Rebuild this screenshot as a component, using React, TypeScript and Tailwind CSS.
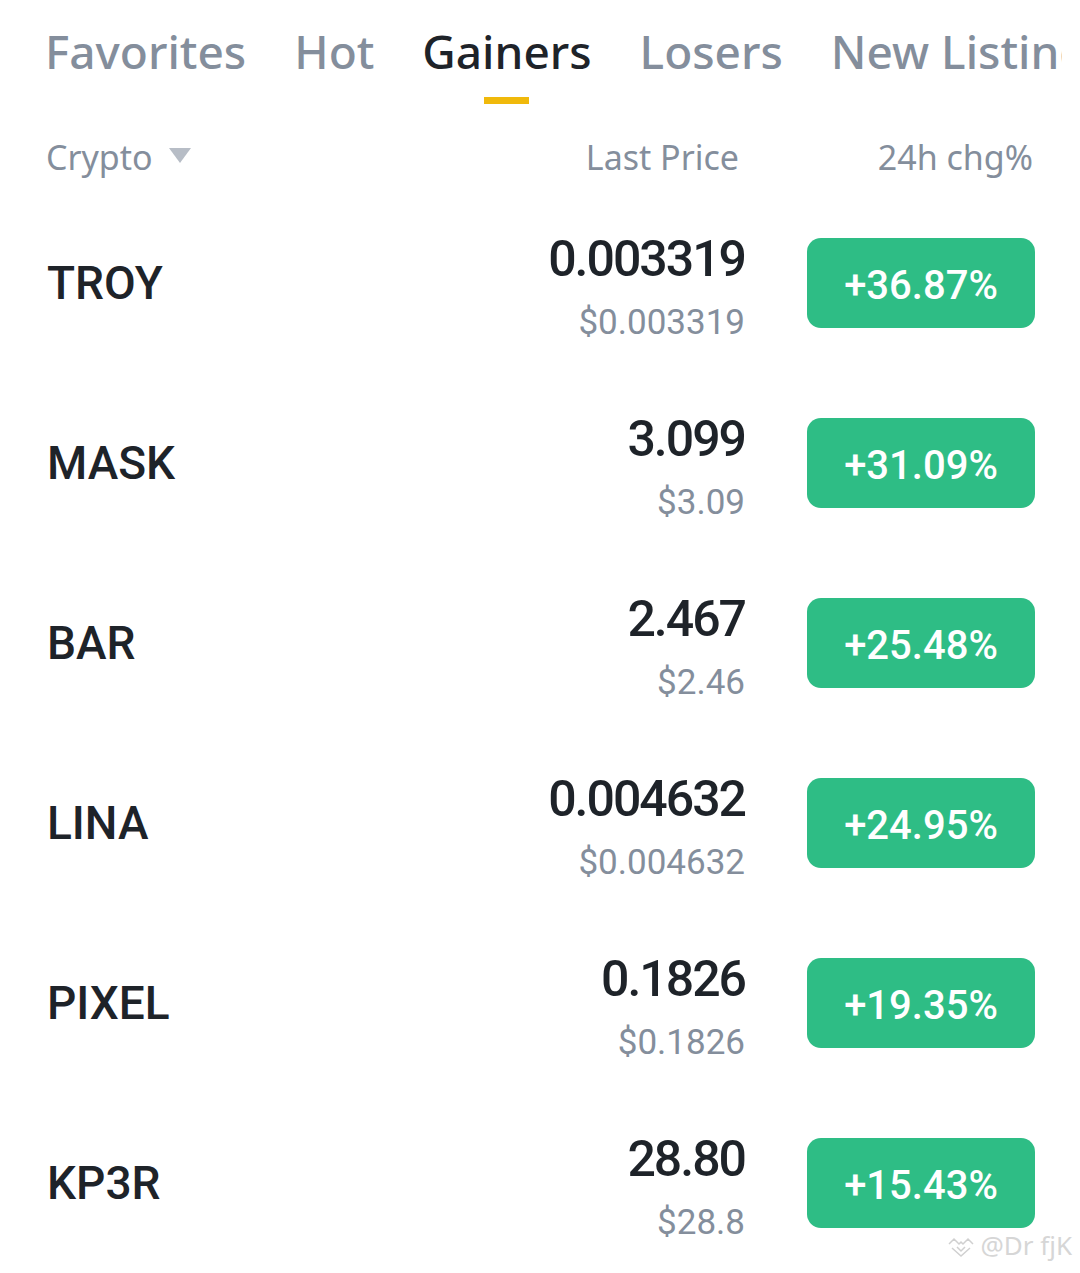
import React from 'react';

interface Row {
  symbol: string;
  price: string;
  usd: string;
  change: string;
}

const rows: Row[] = [
  { symbol: 'TROY', price: '0.003319', usd: '$0.003319', change: '+36.87%' },
  { symbol: 'MASK', price: '3.099', usd: '$3.09', change: '+31.09%' },
  { symbol: 'BAR', price: '2.467', usd: '$2.46', change: '+25.48%' },
  { symbol: 'LINA', price: '0.004632', usd: '$0.004632', change: '+24.95%' },
  { symbol: 'PIXEL', price: '0.1826', usd: '$0.1826', change: '+19.35%' },
  { symbol: 'KP3R', price: '28.80', usd: '$28.8', change: '+15.43%' },
];

const tabs = ['Favorites', 'Hot', 'Gainers', 'Losers', 'New Listing'];

const App: React.FC = () => {
  return (
    <div className="relative w-[1080px] h-[1273px] bg-white overflow-hidden font-['Noto_Sans',sans-serif]">
      {/* tabs, last one runs off the edge */}
      <div className="w-[1062px] overflow-hidden whitespace-nowrap pt-[21px] pl-[45px]">
        <div className="flex gap-[48px]">
          {tabs.map((t) => {
            const active = t === 'Gainers';
            return (
              <div key={t} className="flex flex-col items-center shrink-0">
                <span
                  className={`text-[46px] leading-[60px] font-medium ${
                    active ? 'text-[#1E2329]' : 'text-[#848E9C]'
                  }`}
                >
                  {t}
                </span>
                <div className={`mt-[16px] h-[7px] w-[45px] ${active ? 'bg-[#F0B90B]' : 'bg-transparent'}`} />
              </div>
            );
          })}
        </div>
      </div>

      {/* column headers */}
      <div className="h-[89px] pt-[17px] flex items-center pl-[46px] pr-[47px] text-[34px] text-[#848E9C]">
        <div className="flex-1 flex items-center gap-[16px]">
          <span>Crypto</span>
          <svg width="22" height="15" viewBox="0 0 22 15" className="mt-[-4px]">
            <path d="M0 0 H22 L11 15 Z" fill="#B7BDC6" />
          </svg>
        </div>
        <div className="pr-[4px]">Last Price</div>
        <div className="w-[290px] text-right">24h chg%</div>
      </div>

      {/* rows */}
      <div className="flex flex-col">
        {rows.map((r) => (
          <div key={r.symbol} className="h-[180px] flex items-center pl-[47px] pr-[45px]">
            <div className="flex-1 font-['Roboto',sans-serif] text-[46px] text-[#1E2329] font-medium">
              {r.symbol}
            </div>
            <div className="flex flex-col items-end mt-[8px] font-['Roboto',sans-serif]">
              <span className="text-[50px] leading-[56px] font-medium tracking-[-2px] text-[#1E2329]">
                {r.price}
              </span>
              <span className="mt-[16px] text-[35px] leading-[40px] text-[#848E9C]">{r.usd}</span>
            </div>
            <div className="ml-[62px] w-[228px] h-[90px] pt-[6px] rounded-[14px] bg-[#2EBD85] flex items-center justify-center font-['Roboto',sans-serif] text-[40px] font-medium text-white">
              {r.change}
            </div>
          </div>
        ))}
      </div>

      {/* watermark */}
      <div className="absolute right-[8px] bottom-[8px] flex items-center gap-[4px] text-[26px] text-[#d6d6d6]">
        <svg width="30" height="24" viewBox="0 0 30 24" fill="none" stroke="#d0d0d0" strokeWidth="1.5">
          <path d="M3 10 L8 5 L13 10 L15 8 L17 10 L22 5 L27 10" />
          <path d="M6 14 L15 22 L24 14" />
          <path d="M11 13 L15 17 L19 13" />
        </svg>
        <span>@Dr fjK</span>
      </div>
    </div>
  );
};

export default App;
